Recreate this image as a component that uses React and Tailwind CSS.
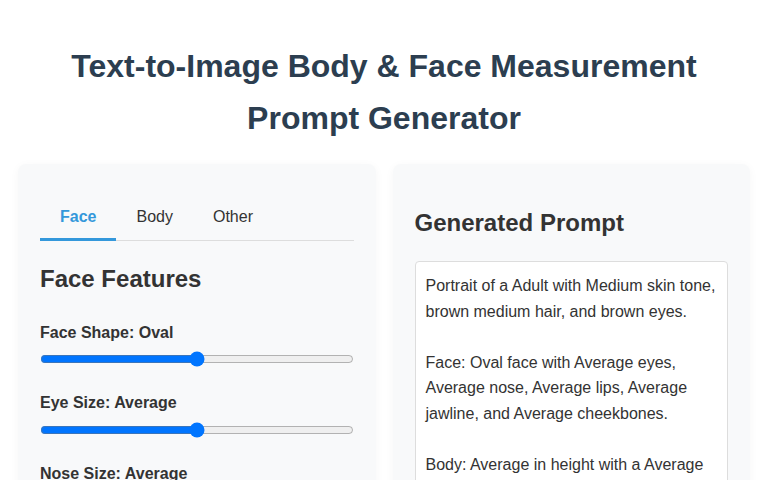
import { useState } from "react";

const faceFields = [
  { label: "Face Shape", value: "Oval" },
  { label: "Eye Size", value: "Average" },
  { label: "Nose Size", value: "Average" },
  { label: "Lip Size", value: "Average" },
];

const tabs = ["Face", "Body", "Other"];

export default function App() {
  const [tab, setTab] = useState("Face");

  const prompt =
    "Portrait of a Adult with Medium skin tone, brown medium hair, and brown eyes.\n\n" +
    "Face: Oval face with Average eyes, Average nose, Average lips, Average jawline, and Average cheekbones.\n\n" +
    "Body: Average in height with a Average build, Average shoulders, Average waist, and Average hips.";

  return (
    <div className="min-h-screen bg-white px-[18px] pt-5 pb-5 font-['Liberation_Sans',Arial,sans-serif] leading-[1.6] text-[#333]">
      <h1 className="mt-5 mb-5 text-center text-[32px] leading-[52px] font-bold text-[#2c3e50]">
        Text-to-Image Body &amp; Face Measurement Prompt Generator
      </h1>

      <div className="grid grid-cols-2 gap-[17px]">
        {/* controls */}
        <div className="rounded-lg bg-[#f8f9fa] p-[22px] shadow-[0_2px_10px_rgba(0,0,0,0.04)]">
          <div className="mb-[22px] flex border-b border-[#ddd]">
            {tabs.map((t) => (
              <button
                key={t}
                onClick={() => setTab(t)}
                className={
                  t === tab
                    ? "-mb-px border-b-[3px] border-[#3498db] px-5 pt-[18px] pb-2 font-bold text-[#3498db]"
                    : "-mb-px border-b-[3px] border-transparent px-5 pt-[18px] pb-2 text-[#333]"
                }
              >
                {t}
              </button>
            ))}
          </div>

          <h2 className="mb-[25px] text-2xl font-bold text-[#333]">Face Features</h2>

          {faceFields.map((f) => (
            <div key={f.label} className="mb-[23px]">
              <label className="mb-[6px] block font-bold text-[#333]">
                {f.label}: {f.value}
              </label>
              <input type="range" min="0" max="4" defaultValue="2" className="block h-4 w-full" />
            </div>
          ))}
        </div>

        {/* output */}
        <div className="rounded-lg bg-[#f8f9fa] p-[22px] shadow-[0_2px_10px_rgba(0,0,0,0.04)]">
          <h2 className="mt-[21px] mb-[22px] text-2xl font-bold text-[#333]">Generated Prompt</h2>
          <textarea
            readOnly
            value={prompt}
            className="block h-[320px] w-full resize-none rounded border border-[#ddd] bg-white px-[10px] pt-[11px] pb-[10px] text-base leading-[1.6] text-[#333] outline-none"
          />
        </div>
      </div>
    </div>
  );
}
